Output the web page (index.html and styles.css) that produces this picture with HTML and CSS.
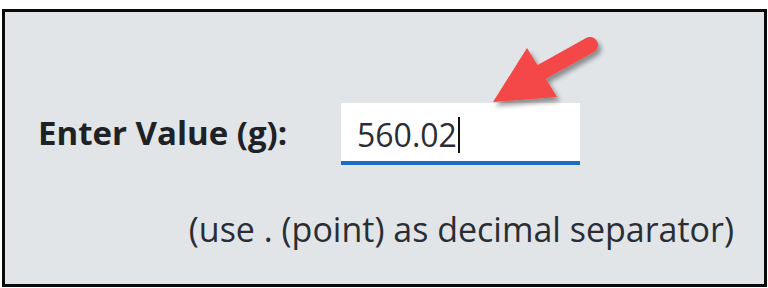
FILE: index.html
```html
<!DOCTYPE html>
<html>
<head>
<meta charset="utf-8">
<link rel="stylesheet" href="styles.css">
</head>
<body>
<div class="panel">
  <div class="row">
    <span class="label">Enter Value (g):</span>
    <div class="field">
      <span class="value">560.02</span><span class="caret"></span>
    </div>
  </div>
  <div class="hint">(use . (point) as decimal separator)</div>
  <svg class="arrow" width="140" height="100" viewBox="0 0 140 100">
    <defs>
      <filter id="sh" x="-20%" y="-20%" width="150%" height="150%">
        <feGaussianBlur in="SourceAlpha" stdDeviation="2.5"/>
        <feOffset dx="3" dy="4"/>
        <feComponentTransfer><feFuncA type="linear" slope="0.4"/></feComponentTransfer>
        <feMerge><feMergeNode/><feMergeNode in="SourceGraphic"/></feMerge>
      </filter>
    </defs>
    <g filter="url(#sh)" fill="#f44646">
      <path d="M17 88 L51 34 L81 83 Z"/>
      <line x1="62" y1="60" x2="114" y2="31" stroke="#f44646" stroke-width="16" stroke-linecap="round"/>
    </g>
  </svg>
</div>
</body>
</html>
```

FILE: styles.css
```css
html, body {
  margin: 0;
  padding: 0;
  background: #ffffff;
}
body {
  width: 768px;
  height: 288px;
  overflow: hidden;
}
.panel {
  position: relative;
  box-sizing: border-box;
  margin: 9px 0 0 2px;
  width: 765px;
  height: 278px;
  border: 3px solid #0a0a0a;
  background: #e1e5e8;
  font-family: "Open Sans", "Noto Sans", sans-serif;
  color: #1e2126;
}
.row {
  display: flex;
  align-items: flex-end;
  padding: 91px 0 0 33px;
}
.label {
  font-weight: 700;
  font-size: 33px;
  line-height: 44px;
  width: 303px;
  padding-bottom: 10px;
  white-space: nowrap;
}
.field {
  box-sizing: border-box;
  width: 239px;
  height: 62px;
  background: #ffffff;
  border-bottom: 4px solid #1a6fc0;
  display: flex;
  align-items: center;
  padding: 6px 0 0 16px;
}
.value {
  font-size: 32px;
  line-height: 44px;
  color: #2a2d33;
}
.caret {
  display: inline-block;
  width: 2px;
  height: 36px;
  background: #111;
  margin-left: 1px;
}
.hint {
  text-align: right;
  padding: 42px 30px 0 0;
  font-size: 34px;
  line-height: 44px;
  color: #2a2d33;
  white-space: nowrap;
}
.arrow {
  position: absolute;
  left: 471px;
  top: 2px;
}
```
